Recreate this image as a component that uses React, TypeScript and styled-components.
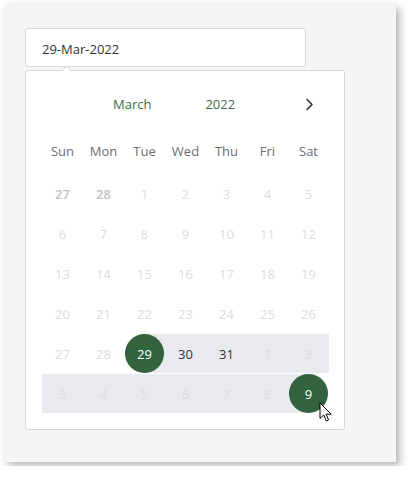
import styled, { createGlobalStyle } from 'styled-components';

const GlobalStyle = createGlobalStyle`
  html, body {
    margin: 0;
    padding: 0;
    background: #ffffff;
  }
  body {
    font-family: 'Open Sans', 'Noto Sans', 'Liberation Sans', sans-serif;
    -webkit-font-smoothing: antialiased;
  }
`;

type Tone = 'prev' | 'disabled' | 'normal';
type Range = 'none' | 'start' | 'mid' | 'end';

type Day = {
  label: number;
  tone: Tone;
  range?: Range;
  selected?: boolean;
};

const WEEKDAYS = ['Sun', 'Mon', 'Tue', 'Wed', 'Thu', 'Fri', 'Sat'];

const off = (from: number, to: number): Day[] => {
  const days: Day[] = [];
  for (let i = from; i <= to; i++) days.push({ label: i, tone: 'disabled' });
  return days;
};

const WEEKS: Day[][] = [
  [{ label: 27, tone: 'prev' }, { label: 28, tone: 'prev' }, ...off(1, 5)],
  off(6, 12),
  off(13, 19),
  off(20, 26),
  [
    { label: 27, tone: 'disabled' },
    { label: 28, tone: 'disabled' },
    { label: 29, tone: 'normal', range: 'start', selected: true },
    { label: 30, tone: 'normal', range: 'mid' },
    { label: 31, tone: 'normal', range: 'mid' },
    { label: 1, tone: 'disabled', range: 'mid' },
    { label: 2, tone: 'disabled', range: 'mid' },
  ],
  [
    ...off(3, 8).map((d) => ({ ...d, range: 'mid' as Range })),
    { label: 9, tone: 'normal', range: 'end', selected: true },
  ],
];

const RANGE_BG = '#e9eaed';
const GREEN = '#32633e';

const Page = styled.div`
  padding: 4px;
  width: 392px;
`;

const Panel = styled.div`
  position: relative;
  background: #f4f5f7;
  height: 458px;
  box-sizing: border-box;
  padding: 24px 21px;
  box-shadow: 4px 4px 8px rgba(0, 0, 0, 0.28), 0 0 1px rgba(0, 0, 0, 0.08);
`;

const DateInput = styled.div`
  width: 281px;
  height: 39px;
  box-sizing: border-box;
  border: 1px solid #d6d7da;
  border-radius: 3px;
  background: #fff;
  display: flex;
  align-items: center;
  padding: 2px 16px 0;
  font-size: 13px;
  color: #333;
`;

const Popup = styled.div`
  position: relative;
  margin-top: 3px;
  width: 320px;
  box-sizing: border-box;
  border: 1px solid #d6d7da;
  border-radius: 3px;
  background: #fff;
  padding: 16px;
`;

const Caret = styled.span`
  position: absolute;
  top: -4px;
  left: 37px;
  width: 6px;
  height: 6px;
  background: #fff;
  border-top: 1px solid #d6d7da;
  border-left: 1px solid #d6d7da;
  transform: rotate(45deg);
`;

const Header = styled.div`
  display: flex;
  align-items: center;
  height: 34px;
  margin-bottom: 10px;
`;

const HeaderLabel = styled.span<{ $gap: number }>`
  margin-left: ${(p) => p.$gap}px;
  font-size: 13px;
  color: #3d6c48;
`;

const NextButton = styled.span`
  margin-left: auto;
  width: 37px;
  height: 34px;
  display: flex;
  align-items: center;
  justify-content: center;
  color: #333;
`;

const WeekdayRow = styled.div`
  display: grid;
  grid-template-columns: repeat(7, 41px);
  height: 40px;
  margin-bottom: 3px;
`;

const Weekday = styled.span`
  display: flex;
  align-items: center;
  justify-content: center;
  font-size: 13px;
  color: #6e6e6e;
`;

const DayGrid = styled.div`
  display: grid;
  grid-template-columns: repeat(7, 41px);
  grid-auto-rows: 39px;
  row-gap: 1px;
`;

const rangeBackground = (range: Range) => {
  switch (range) {
    case 'mid':
      return RANGE_BG;
    case 'start':
      return `linear-gradient(to right, transparent 50%, ${RANGE_BG} 50%)`;
    case 'end':
      return `linear-gradient(to right, ${RANGE_BG} 50%, transparent 50%)`;
    default:
      return 'transparent';
  }
};

const Cell = styled.div<{ $range: Range }>`
  display: flex;
  align-items: center;
  justify-content: center;
  background: ${(p) => rangeBackground(p.$range)};
`;

const toneColor: Record<Tone, string> = {
  prev: '#c2c2c2',
  disabled: '#dcdcdc',
  normal: '#333333',
};

const DayNumber = styled.span<{ $tone: Tone; $selected: boolean }>`
  width: 39px;
  height: 39px;
  border-radius: 50%;
  display: flex;
  align-items: center;
  justify-content: center;
  font-size: 13px;
  font-weight: ${(p) => (p.$tone === 'prev' ? 600 : 400)};
  color: ${(p) => (p.$selected ? '#ffffff' : toneColor[p.$tone])};
  background: ${(p) => (p.$selected ? GREEN : 'transparent')};
`;

const Pointer = styled.svg`
  position: absolute;
  left: 315px;
  top: 398px;
`;

const ChevronRight = () => (
  <svg width="9" height="13" viewBox="0 0 9 13" fill="none">
    <path d="M2 1.5 L7 6.5 L2 11.5" stroke="currentColor" strokeWidth="1.6" strokeLinecap="round" strokeLinejoin="round" />
  </svg>
);

export default function App() {
  return (
    <Page>
      <GlobalStyle />
      <Panel>
        <DateInput>29-Mar-2022</DateInput>
        <Popup>
          <Caret />
          <Header>
            <HeaderLabel $gap={71}>March</HeaderLabel>
            <HeaderLabel $gap={54}>2022</HeaderLabel>
            <NextButton>
              <ChevronRight />
            </NextButton>
          </Header>
          <WeekdayRow>
            {WEEKDAYS.map((d) => (
              <Weekday key={d}>{d}</Weekday>
            ))}
          </WeekdayRow>
          <DayGrid>
            {WEEKS.flat().map((day, i) => (
              <Cell key={i} $range={day.range ?? 'none'}>
                <DayNumber $tone={day.tone} $selected={!!day.selected}>
                  {day.label}
                </DayNumber>
              </Cell>
            ))}
          </DayGrid>
        </Popup>
        <Pointer width="14" height="21" viewBox="0 0 14 21">
          <path
            d="M1 1 L1 16.5 L4.7 13 L7.3 19 L9.6 18 L7.1 12.2 L12.2 12.2 Z"
            fill="#ffffff"
            stroke="#000000"
            strokeWidth="1"
            strokeLinejoin="round"
          />
        </Pointer>
      </Panel>
    </Page>
  );
}
